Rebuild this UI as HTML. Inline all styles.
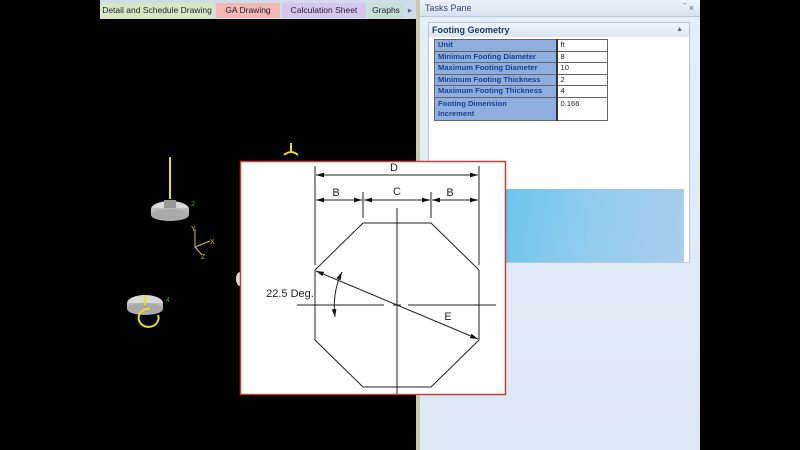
<!DOCTYPE html>
<html><head><meta charset="utf-8"><style>
*{margin:0;padding:0;box-sizing:border-box}
body{width:800px;height:450px;background:#000;position:relative;overflow:hidden;font-family:"Liberation Sans",sans-serif}
.tabs{position:absolute;left:100px;top:0;width:316px;height:19px;background:#cfdcec;font-size:8.5px;color:#223}
.tabs div{position:absolute;top:3px;height:15px;line-height:15px;text-align:center;white-space:nowrap;overflow:hidden}
.pane{position:absolute;left:420px;top:0;width:280px;height:450px;background:linear-gradient(#e6eef8,#dce8f4)}
.ptitle{position:absolute;left:0;top:0;width:280px;height:17px;background:linear-gradient(#eef3fa,#d6e2f0);font-size:9px;color:#3a4a66;line-height:17px;padding-left:5px;border-bottom:1px solid #b8c8dc}
.inner{position:absolute;left:8px;top:22px;width:262px;height:241px;background:#fff;border:1px solid #b8c8e0}
.ihead{height:14px;background:linear-gradient(#eef4fb,#dce7f4);font-size:9px;font-weight:bold;color:#1f3a66;line-height:14px;padding-left:3px}
table{position:absolute;left:5px;top:16px;border-collapse:collapse;font-size:7.6px;table-layout:fixed;width:173px}
td{border:1px solid #666;height:11.5px;line-height:10px;padding:0 3px;white-space:nowrap;overflow:hidden}
td.l{background:#8eaee0;color:#1c3f8c;font-weight:bold;width:122px;border-right:2px solid #333}
td.v{background:#fff;color:#222;width:51px}
</style></head><body>
<div class="tabs">
<div style="left:0;width:114px;background:#d5e8c0">Detail and Schedule Drawing</div>
<div style="left:116px;width:64px;background:#f3b8b4">GA Drawing</div>
<div style="left:182px;width:84px;background:#d6c6ec">Calculation Sheet</div>
<div style="left:268px;width:36px;background:#c6e0d8">Graphs</div>
<div style="left:304px;width:12px;color:#4a6aa0">&#9656;</div>
</div>
<div style="position:absolute;left:416px;top:0;width:4px;height:450px;background:#c8cca8"></div>
<svg style="position:absolute;left:100px;top:19px" width="316" height="431">
<line x1="70" y1="138" x2="70" y2="180" stroke="#e8e020" stroke-width="2"/>
<ellipse cx="70" cy="190" rx="19" ry="8" fill="#d8d8d8"/><rect x="51" y="189" width="38" height="7" fill="#bbb"/><ellipse cx="70" cy="196" rx="19" ry="6" fill="#aaa"/>
<rect x="64" y="181" width="12" height="8" fill="#999"/>
<text x="91" y="187" fill="#3a3" font-size="7">2</text>
<g stroke="#d8c040" stroke-width="1" fill="none"><path d="M95 210 V228 L110 222 M95 228 L102 236"/></g>
<text x="91" y="212" fill="#d8c040" font-size="7">Y</text><text x="110" y="225" fill="#d8c040" font-size="7">X</text><text x="101" y="240" fill="#d8c040" font-size="7">Z</text>
<ellipse cx="45" cy="284" rx="18" ry="8" fill="#d8d8d8"/><rect x="27" y="284" width="36" height="6" fill="#bbb"/><ellipse cx="45" cy="290" rx="18" ry="6" fill="#aaa"/>
<path d="M58 296 A10 9 0 1 1 50 290" stroke="#e8e020" stroke-width="2" fill="none"/>
<line x1="45" y1="276" x2="45" y2="286" stroke="#e8e020" stroke-width="2"/>
<text x="66" y="283" fill="#3a3" font-size="7">4</text>
<path d="M191 124 V134 M184 136 Q191 130 198 136" stroke="#e8e020" stroke-width="2" fill="none"/>
<ellipse cx="140" cy="260" rx="4" ry="7" fill="#ddd"/>
</svg>
<div class="pane">
<div class="ptitle">Tasks Pane<span style="position:absolute;right:6px;color:#667">&#8254; &#215;</span></div>
<div class="inner">
<div class="ihead">Footing Geometry<span style="position:absolute;right:6px;font-size:7px;color:#667">&#9650;</span></div>
<table>
<tr><td class="l">Unit</td><td class="v">ft</td></tr>
<tr><td class="l">Minimum Footing Diameter</td><td class="v">8</td></tr>
<tr><td class="l">Maximum Footing Diameter</td><td class="v">10</td></tr>
<tr><td class="l">Minimum Footing Thickness</td><td class="v">2</td></tr>
<tr><td class="l">Maximum Footing Thickness</td><td class="v">4</td></tr>
<tr><td class="l" style="height:23px;vertical-align:top;padding-top:1px">Footing Dimension<br>Increment</td><td class="v" style="vertical-align:top;padding-top:1px">0.166</td></tr>
</table>
<div style="position:absolute;left:77px;top:166px;width:178px;height:73px;background:linear-gradient(100deg,#6cc4ec,#94ccee 50%,#a8cdec)"></div>
</div>
</div>
<svg style="position:absolute;left:0;top:0" width="800" height="450">
<defs><marker id="a" viewBox="0 0 10 6" refX="10" refY="3" markerWidth="8" markerHeight="5" orient="auto-start-reverse"><path d="M0 0L10 3L0 6z" fill="#111"/></marker></defs>
<rect x="240.5" y="161.5" width="265" height="233" fill="#fff" stroke="#c0403c" stroke-width="1.5"/>
<g stroke="#222" stroke-width="1" fill="none">
<path d="M363 223 H431 L479 270 V340 L431 387 H363 L315 340 V270 Z"/>
<line x1="315" y1="166" x2="315" y2="265"/><line x1="479" y1="166" x2="479" y2="265"/>
<line x1="316" y1="175" x2="478" y2="175" marker-start="url(#a)" marker-end="url(#a)"/>
<line x1="363" y1="192" x2="363" y2="218"/><line x1="431" y1="192" x2="431" y2="218"/>
<line x1="316" y1="200" x2="362" y2="200" marker-start="url(#a)" marker-end="url(#a)"/>
<line x1="364" y1="200" x2="430" y2="200" marker-start="url(#a)" marker-end="url(#a)"/>
<line x1="432" y1="200" x2="478" y2="200" marker-start="url(#a)" marker-end="url(#a)"/>
<line x1="397" y1="208" x2="397" y2="394"/>
<line x1="297" y1="305" x2="384" y2="305"/><line x1="408" y1="305" x2="496" y2="305"/>
<line x1="393" y1="305" x2="401" y2="305"/>
<line x1="316" y1="271" x2="478" y2="339" marker-start="url(#a)" marker-end="url(#a)"/>
<path d="M342 272 Q332 292 335 317" marker-start="url(#a)" marker-end="url(#a)"/>
</g>
<g font-size="11" fill="#222" text-anchor="middle">
<text x="394" y="171">D</text><text x="336" y="196">B</text><text x="397" y="195">C</text><text x="450" y="196">B</text>
<text x="448" y="320">E</text>
<text x="290" y="297">22.5 Deg.</text>
</g>
</svg>
</body></html>
